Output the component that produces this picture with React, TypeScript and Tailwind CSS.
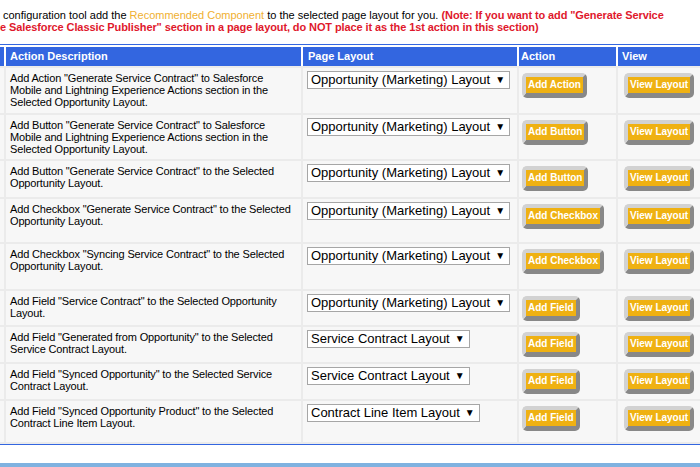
const rows = [
  {
    h: "h-[45px]",
    desc: ['Add Action "Generate Service Contract" to Salesforce', "Mobile and Lightning Experience Actions section in the", "Selected Opportunity Layout."],
    layout: "Opportunity (Marketing) Layout",
    action: "Add Action",
  },
  {
    h: "h-[44px]",
    desc: ['Add Button "Generate Service Contract" to Salesforce', "Mobile and Lightning Experience Actions section in the", "Selected Opportunity Layout."],
    layout: "Opportunity (Marketing) Layout",
    action: "Add Button",
  },
  {
    h: "h-[36px]",
    desc: ['Add Button "Generate Service Contract" to the Selected', "Opportunity Layout."],
    layout: "Opportunity (Marketing) Layout",
    action: "Add Button",
  },
  {
    h: "h-[43px]",
    desc: ['Add Checkbox "Generate Service Contract" to the Selected', "Opportunity Layout."],
    layout: "Opportunity (Marketing) Layout",
    action: "Add Checkbox",
  },
  {
    h: "h-[45px]",
    desc: ['Add Checkbox "Syncing Service Contract" to the Selected', "Opportunity Layout."],
    layout: "Opportunity (Marketing) Layout",
    action: "Add Checkbox",
  },
  {
    h: "h-[34px]",
    desc: ['Add Field "Service Contract" to the Selected Opportunity', "Layout."],
    layout: "Opportunity (Marketing) Layout",
    action: "Add Field",
  },
  {
    h: "h-[35px]",
    desc: ['Add Field "Generated from Opportunity" to the Selected', "Service Contract Layout."],
    layout: "Service Contract Layout",
    action: "Add Field",
  },
  {
    h: "h-[35px]",
    desc: ['Add Field "Synced Opportunity" to the Selected Service', "Contract Layout."],
    layout: "Service Contract Layout",
    action: "Add Field",
  },
  {
    h: "h-[41px]",
    desc: ['Add Field "Synced Opportunity Product" to the Selected', "Contract Line Item Layout."],
    layout: "Contract Line Item Layout",
    action: "Add Field",
  },
];

function GoldButton({ label }: { label: string }) {
  return (
    <span className="flex rounded-[5px] border-[4px] border-b-[5px] border-t-[#d2d2d2] border-l-[#d2d2d2] border-r-[#888888] border-b-[#888888] bg-[#888888]">
      <span className="flex h-[16px] items-center bg-[#efb112] px-[2px] text-[10px] font-bold leading-[16px] text-white whitespace-nowrap">
        {label}
      </span>
    </span>
  );
}

function LayoutSelect({ value }: { value: string }) {
  return (
    <span className="flex h-[18px] items-center border border-[#a6a6a6] bg-white pl-[3px] pr-[4px] text-[13px] leading-[16px] text-black whitespace-nowrap">
      {value}
      <span className="ml-[5px] text-[10px]">▼</span>
    </span>
  );
}

export default function App() {
  return (
    <div className="h-[467px] w-[700px] overflow-hidden bg-white font-['Liberation_Sans',Arial,sans-serif]">
      <div className="pt-[9px] text-[11px] leading-[12px] whitespace-nowrap">
        <div className="pl-[3px] text-black">
          configuration tool add the <span className="text-[#f0b030]">Recommended Component</span> to the selected page
          layout for you. <span className="font-bold tracking-[-0.1px] text-[#e0182c]">(Note: If you want to add "Generate Service</span>
        </div>
        <div className="font-bold tracking-[-0.1px] text-[#e0182c]">
          e Salesforce Classic Publisher" section in a page layout, do NOT place it as the 1st action in this section)
        </div>
      </div>

      <div className="mt-[11px] border-t border-[#3366e0]">
        <div className="grid grid-cols-[4px_295px_214px_97px_1fr] gap-x-[2px] bg-white pt-[2px]">
          <div className="h-[19px] bg-[#3366e0]" />
          <div className="flex h-[19px] items-center bg-[#3366e0] pl-[4px] text-[11px] font-bold text-white">Action Description</div>
          <div className="flex h-[19px] items-center bg-[#3366e0] pl-[5px] text-[11px] font-bold text-white">Page Layout</div>
          <div className="flex h-[19px] items-center bg-[#3366e0] pl-[2px] text-[11px] font-bold text-white">Action</div>
          <div className="flex h-[19px] items-center bg-[#3366e0] pl-[4px] text-[11px] font-bold text-white">View</div>
        </div>
        <div className="grid grid-cols-[4px_295px_214px_97px_1fr] gap-[2px] bg-[#ebebeb] py-[2px]">
          {rows.map((r, i) => (
            <div key={i} className="contents">
              <div className={`${r.h} bg-[#f7f7f7]`} />
              <div className={`${r.h} bg-[#f7f7f7] pl-[4px] pt-[4px] text-[11px] leading-[12px] tracking-[-0.15px] text-black`}>
                {r.desc.map((line, j) => (
                  <div key={j} className="whitespace-nowrap">{line}</div>
                ))}
              </div>
              <div className={`${r.h} flex items-start bg-[#f7f7f7] pl-[4px] pt-[3px]`}>
                <LayoutSelect value={r.layout} />
              </div>
              <div className={`${r.h} flex items-start bg-[#f7f7f7] pl-[3px] pt-[5px]`}>
                <GoldButton label={r.action} />
              </div>
              <div className={`${r.h} flex items-start bg-[#f7f7f7] pl-[6px] pt-[5px]`}>
                <GoldButton label="View Layout" />
              </div>
            </div>
          ))}
        </div>
        <div className="h-[1px] bg-[#3366e0]" />
      </div>
      <div className="mt-[18px] h-[5px] bg-[#7fb2e0]" />
    </div>
  );
}
